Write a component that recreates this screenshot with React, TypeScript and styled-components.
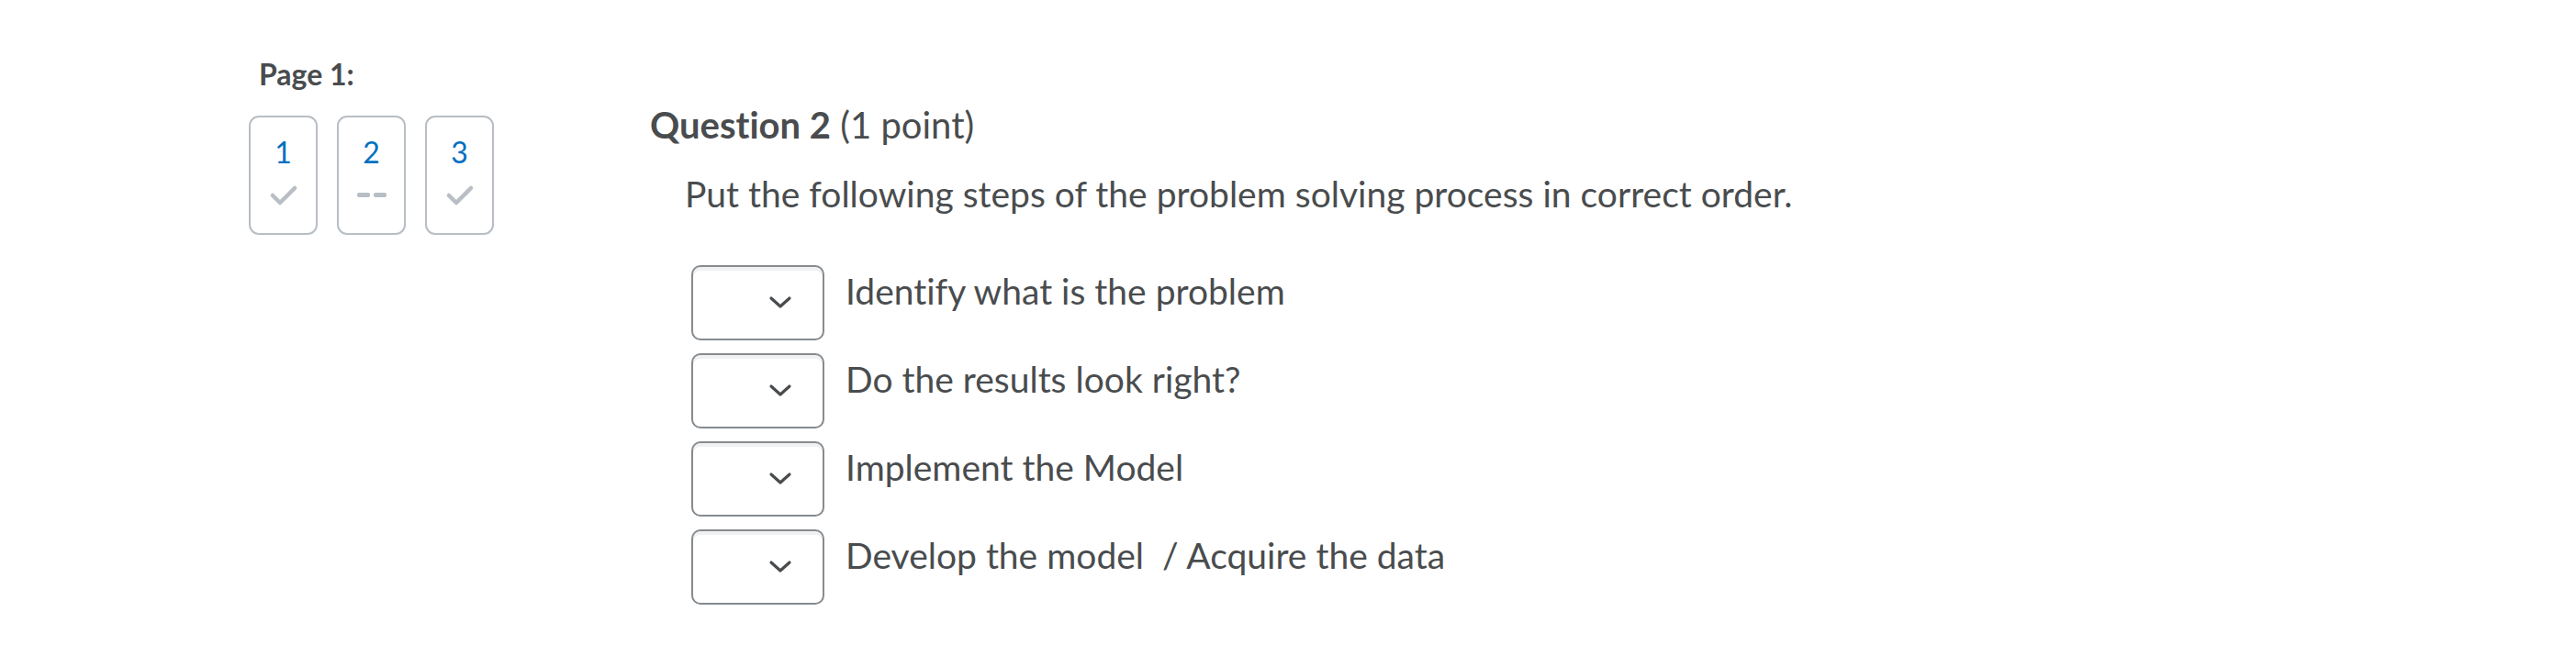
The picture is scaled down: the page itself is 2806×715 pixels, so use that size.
import styled, { createGlobalStyle } from 'styled-components';

const GlobalStyle = createGlobalStyle`
  body {
    margin: 0;
    background: #ffffff;
    font-family: Lato, "Open Sans", sans-serif;
    font-variant-ligatures: none;
    color: #494c4e;
  }
`;

type NavState = 'done' | 'empty';

const pages: { num: number; state: NavState }[] = [
  { num: 1, state: 'done' },
  { num: 2, state: 'empty' },
  { num: 3, state: 'done' },
];

const steps = [
  'Identify what is the problem',
  'Do the results look right?',
  'Implement the Model',
  'Develop the model \u00a0/ Acquire the data',
];

export default function App() {
  return (
    <>
      <GlobalStyle />
      <Layout>
        <Sidebar>
          <PageLabel>Page 1:</PageLabel>
          <NavRow>
            {pages.map((p) => (
              <NavBox key={p.num}>
                <NavNum>{p.num}</NavNum>
                <NavMark>
                  {p.state === 'done' ? (
                    <svg width="30" height="24" viewBox="0 0 30 24">
                      <polyline points="3,12 11,20 27,4" fill="none" stroke="#b8bec4" strokeWidth="4.5" strokeLinecap="round" strokeLinejoin="round" />
                    </svg>
                  ) : (
                    <Dashes>
                      <Dash />
                      <Dash />
                    </Dashes>
                  )}
                </NavMark>
              </NavBox>
            ))}
          </NavRow>
        </Sidebar>
        <Main>
          <Heading>
            <strong>Question 2</strong> (1 point)
          </Heading>
          <Prompt>Put the following steps of the problem solving process in correct order.</Prompt>
          <StepList>
            {steps.map((s) => (
              <StepRow key={s}>
                <SelectBox>
                  <svg width="26" height="15" viewBox="0 0 26 15">
                    <polyline points="3,3 13,12 23,3" fill="none" stroke="#494c4e" strokeWidth="3.2" strokeLinecap="round" strokeLinejoin="round" />
                  </svg>
                </SelectBox>
                <StepText>{s}</StepText>
              </StepRow>
            ))}
          </StepList>
        </Main>
      </Layout>
    </>
  );
}

const Layout = styled.div`
  display: flex;
  padding-left: 271px;
`;

const Sidebar = styled.div`
  width: 437px;
  padding-top: 62px;
`;

const PageLabel = styled.div`
  padding-left: 11px;
  font-size: 32px;
  font-weight: 700;
  line-height: 1.2;
`;

const NavRow = styled.div`
  display: flex;
  gap: 21px;
  margin-top: 26px;
`;

const NavBox = styled.div`
  box-sizing: border-box;
  width: 75px;
  height: 130px;
  border: 2px solid #b8bec4;
  border-radius: 11px;
  display: flex;
  flex-direction: column;
  align-items: center;
`;

const NavNum = styled.div`
  margin-top: 19px;
  font-size: 32px;
  line-height: 1.2;
  color: #006fbf;
`;

const NavMark = styled.div`
  margin-top: 14px;
  height: 26px;
  display: flex;
  align-items: center;
`;

const Dashes = styled.div`
  display: flex;
  gap: 4px;
`;

const Dash = styled.span`
  width: 14px;
  height: 5px;
  border-radius: 2px;
  background: #b8bec4;
`;

const Main = styled.div`
  padding-top: 112px;
`;

const Heading = styled.div`
  font-size: 40px;
  line-height: 1.2;
  strong {
    font-weight: 700;
  }
`;

const Prompt = styled.div`
  margin-top: 28px;
  padding-left: 38px;
  font-size: 39px;
  line-height: 1.2;
`;

const StepList = styled.div`
  margin-top: 54px;
  padding-left: 45px;
  display: flex;
  flex-direction: column;
  gap: 14px;
`;

const StepRow = styled.div`
  display: flex;
  align-items: flex-start;
  gap: 23px;
`;

const SelectBox = styled.div`
  box-sizing: border-box;
  width: 145px;
  height: 82px;
  border: 2px solid #868b8f;
  border-radius: 10px;
  box-shadow: inset 0 4px 0 0 #f0f1f2;
  display: flex;
  align-items: center;
  padding-left: 82px;
`;

const StepText = styled.div`
  margin-top: 5px;
  font-size: 39px;
  line-height: 1.2;
`;
